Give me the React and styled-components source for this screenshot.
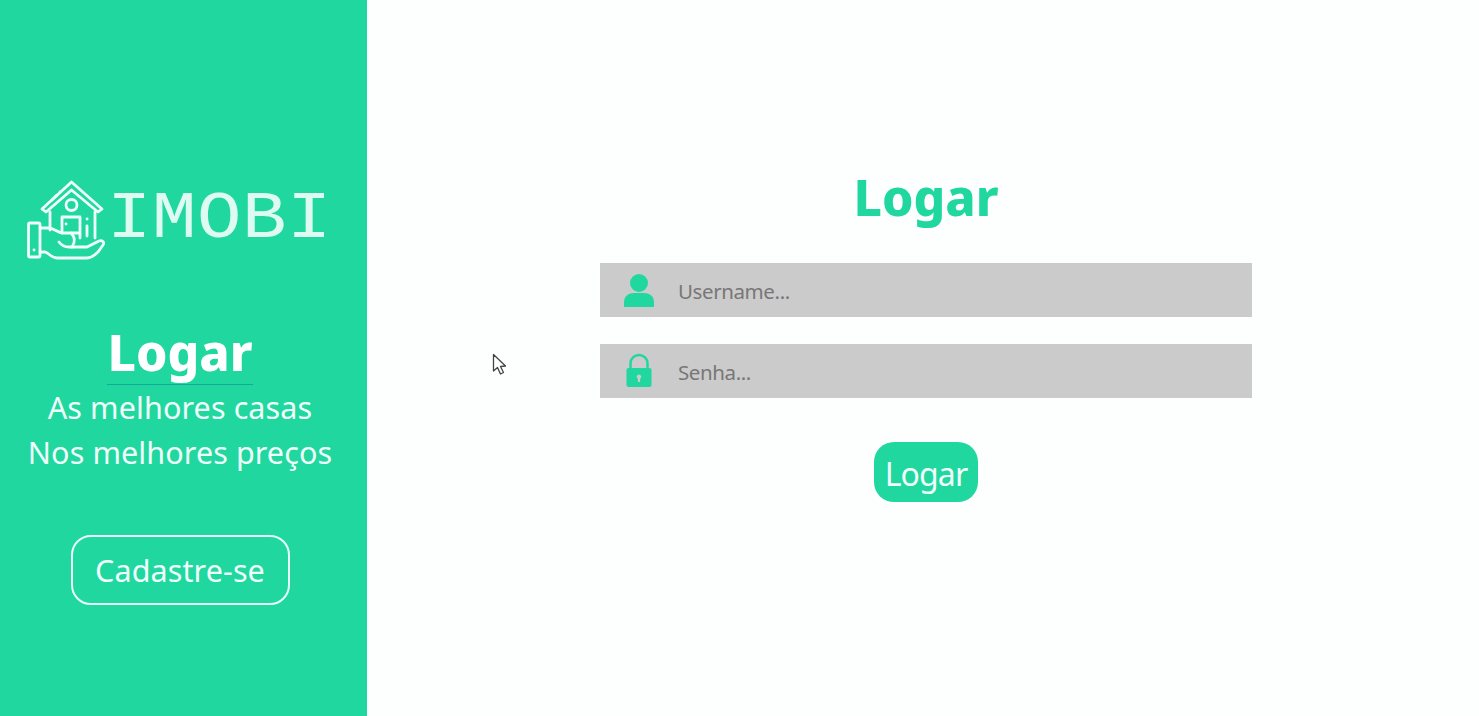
import React from 'react';
import styled, { createGlobalStyle } from 'styled-components';

const GlobalStyle = createGlobalStyle`
	html, body {
		margin: 0;
		padding: 0;
		background: #fdffff;
	}
	* {
		box-sizing: border-box;
	}
`

const Page = styled.div`
	position: relative;
	display: flex;
	width: 100%;
	height: 716px;
	overflow: hidden;
	font-family: "Noto Sans", "Open Sans", sans-serif;
`

const Sidebar = styled.aside`
	display: flex;
	flex-direction: column;
	align-items: center;
	flex: 0 0 367px;
	padding: 180px 7px 0 0;
	background-color: #20d79f;
	color: #fff;
`

const Logo = styled.div`
	display: flex;
	align-items: center;
	width: 310px;
	height: 80px;
`

const LogoText = styled.span`
	display: inline-block;
	margin-left: 2px;
	font-family: "Liberation Mono", monospace;
	font-size: 66px;
	letter-spacing: 0.6px;
	line-height: 80px;
	color: #effffa;
	opacity: 0.92;
	transform: scaleX(1.12);
	transform-origin: left center;
`

const SideTitle = styled.h2`
	margin: 61px 0 0;
	border-bottom: 1px solid #12a89a;
	font-size: 50px;
	font-weight: 800;
	line-height: 63px;
`

const Tagline = styled.p`
	margin: 0;
	font-size: 30.5px;
	line-height: 45px;
	letter-spacing: 0.1px;
	color: #f0fffa;
`

const SignUp = styled.button`
	width: 219px;
	height: 70px;
	margin-top: 60px;
	border: 2px solid #eafff8;
	border-radius: 20px;
	background: transparent;
	color: #f0fffa;
	font-family: inherit;
	font-size: 30.5px;
	letter-spacing: 0.1px;
`

const Main = styled.main`
	display: flex;
	flex-direction: column;
	align-items: center;
	flex: 1;
	padding: 165px 0 0 6px;
`

const Title = styled.h1`
	margin: 0 0 34px;
	color: #20d79f;
	font-size: 50px;
	font-weight: 800;
	line-height: 64px;
`

const Field = styled.label`
	display: flex;
	align-items: center;
	width: 652px;
	height: 54px;
	margin-bottom: 27px;
	padding-left: 23px;
	background-color: #cbcbcb;
`

const FieldIcon = styled.svg`
	flex: 0 0 32px;
	width: 32px;
	height: 36px;
	fill: #20d79f;
`

const Input = styled.input`
	flex: 1;
	min-width: 0;
	margin-left: 23px;
	padding: 1px 0 0;
	border: 0;
	outline: 0;
	background: transparent;
	font-family: inherit;
	font-size: 20.5px;
	letter-spacing: -0.4px;
	color: #333;
	&::placeholder {
		color: #777;
		opacity: 1;
	}
`

const LoginButton = styled.button`
	width: 104px;
	height: 60px;
	margin-top: 17px;
	padding: 2px 0 0;
	border: 0;
	border-radius: 20px;
	background-color: #20d79f;
	color: #f0fffa;
	font-family: inherit;
	font-size: 32px;
	letter-spacing: -0.9px;
`

// mouse pointer that was caught in the screenshot
const Pointer = styled.svg`
	position: absolute;
	left: 492px;
	top: 353px;
	width: 16px;
	height: 23px;
`

function HouseLogo() {
	return (
		<svg width="80" height="80" viewBox="0 0 80 80" fill="none" stroke="#effffa" strokeWidth="2.8" strokeLinecap="round" strokeLinejoin="round" style={{ flex: '0 0 80px' }}>
			<rect x="3.500" y="43" width="11.500" height="34" rx="1.500" />
			<path d="M9 70h.1" />
			<path d="M15 48 h9 c5 0 8 5 14 5 h16" />
			<path d="M15 72 h5 c3 0 6 6 12 6 h30 c5 0 8-3 11-6 l5-7 c2-3-1-5-4-4 l-12 6 H44 c-4 0-7-1-10-5" />
			<path d="M46 53 c3 3 5 8 1 14" />
			<path d="M17 29 L46.500 2 L77 29 L73 32 L46.500 10 L21 32 Z" />
			<path d="M25 32 V50" />
			<path d="M70 32 V58" />
			<path d="M37 53 V37 H55 V58" />
			<path d="M41 44h.1" />
			<circle cx="46.500" cy="25" r="5.500" />
			<path d="M62 39h.1 M62 46v10" />
			<path d="M27 20l5-5 M35 12h.1" />
		</svg>
	)
}

export default function App() {
	return (
		<Page>
			<GlobalStyle />
			<Sidebar>
				<Logo>
					<HouseLogo />
					<LogoText>IMOBI</LogoText>
				</Logo>
				<SideTitle>Logar</SideTitle>
				<Tagline>As melhores casas</Tagline>
				<Tagline>Nos melhores preços</Tagline>
				<SignUp>Cadastre-se</SignUp>
			</Sidebar>
			<Main>
				<Title>Logar</Title>
				<Field>
					<FieldIcon viewBox="0 0 32 36">
						<circle cx="16" cy="11" r="9" />
						<path d="M1 35 v-5 c0-6 5-9 10-9 h10 c5 0 10 3 10 9 v5 Z" />
					</FieldIcon>
					<Input placeholder="Username..." />
				</Field>
				<Field>
					<FieldIcon viewBox="0 0 32 36">
						<path d="M7.500 16 V10.500 a8.500 8.500 0 0 1 17 0 V16" fill="none" stroke="#20d79f" strokeWidth="2.500" />
						<path fillRule="evenodd" d="M5.500 15 h21 a2 2 0 0 1 2 2 v15 a2 2 0 0 1 -2 2 h-21 a2 2 0 0 1 -2 -2 v-15 a2 2 0 0 1 2 -2 Z M16 21.500 a2.300 2.300 0 0 0 -1.100 4.300 V29 h2.200 v-3.200 A2.300 2.300 0 0 0 16 21.500 Z" />
					</FieldIcon>
					<Input placeholder="Senha..." />
				</Field>
				<LoginButton>Logar</LoginButton>
			</Main>
			<Pointer viewBox="0 0 16 23">
				<path d="M1.500 1.500 V18 L5.500 14.500 L8.500 21 L11.500 19.500 L8.500 13.500 L13.500 13 Z" fill="#fff" stroke="#444" strokeWidth="1.300" strokeLinejoin="round" />
			</Pointer>
		</Page>
	)
}
